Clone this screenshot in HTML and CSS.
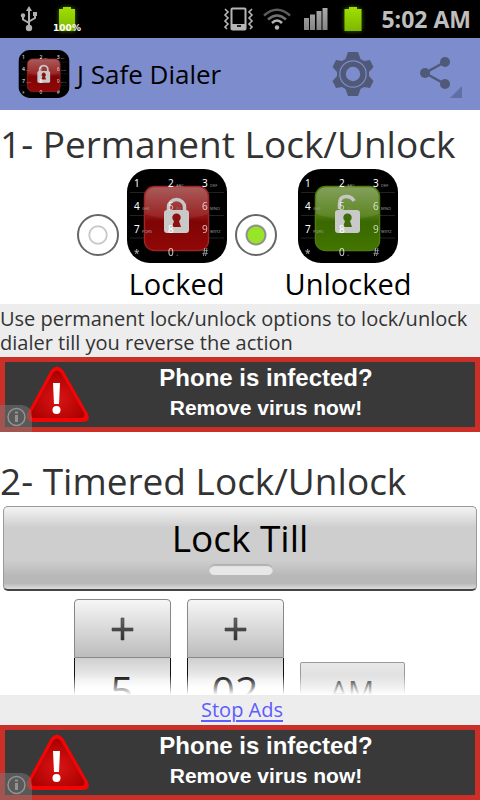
FILE: index.html
```html
<!DOCTYPE html>
<html lang="en">
<head>
<meta charset="utf-8">
<meta name="viewport" content="width=device-width, initial-scale=1">
<title>J Safe Dialer</title>
<link rel="stylesheet" href="styles.css">
</head>
<body>
<svg class="defs" width="0" height="0" aria-hidden="true">
  <defs>
    <linearGradient id="red" x1="0" y1="0" x2="0" y2="1">
      <stop offset="0" stop-color="#a85c5c"/><stop offset=".45" stop-color="#9c2626"/><stop offset=".55" stop-color="#820808"/><stop offset="1" stop-color="#a00c0c"/>
    </linearGradient>
    <linearGradient id="green" x1="0" y1="0" x2="0" y2="1">
      <stop offset="0" stop-color="#84a05c"/><stop offset=".45" stop-color="#5f8726"/><stop offset=".55" stop-color="#3c6c00"/><stop offset="1" stop-color="#4c8000"/>
    </linearGradient>
    <linearGradient id="cell" x1="0" y1="0" x2="0" y2="1">
      <stop offset="0" stop-color="#a0e000"/><stop offset="1" stop-color="#7db800"/>
    </linearGradient>
    <linearGradient id="bars" x1="0" y1="0" x2="0" y2="1">
      <stop offset="0" stop-color="#aaa"/><stop offset="1" stop-color="#858585"/>
    </linearGradient>
    <radialGradient id="warn" cx=".5" cy=".6" r=".6">
      <stop offset="0" stop-color="#dc1414"/><stop offset="1" stop-color="#a80000"/>
    </radialGradient>
    <linearGradient id="plus" x1="0" y1="0" x2="0" y2="1">
      <stop offset="0" stop-color="#6a6a6a"/><stop offset="1" stop-color="#2c2c2c"/>
    </linearGradient>
    <symbol id="pad" viewBox="0 0 100 94">
      <rect width="100" height="94" rx="23" fill="#000"/>
      <path d="M3 23.500H97M3 46.500H97M3 69H97" stroke="#222" stroke-width="1"/>
    </symbol>
    <symbol id="keys" viewBox="0 0 100 94">
      <g fill="#fff" font-family="Noto Sans, sans-serif" font-size="10">
        <text x="7" y="18">1</text><text x="41" y="18">2</text><text x="75" y="18">3</text>
        <text x="7" y="41">4</text><text x="41" y="41" opacity=".6">5</text><text x="75" y="41" opacity=".7">6</text>
        <text x="7" y="64">7</text><text x="41" y="64">8</text><text x="75" y="64" opacity=".7">9</text>
        <text x="7" y="88" opacity=".7">*</text><text x="41" y="87" opacity=".8">0</text><text x="75" y="87" opacity=".7">#</text>
      </g>
      <g fill="#999" font-family="Noto Sans, sans-serif" font-size="4">
        <text x="49" y="18">ABC</text><text x="83" y="18">DEF</text>
        <text x="15" y="41">GHI</text><text x="49" y="41" opacity=".5">JKL</text><text x="83" y="41">MNO</text>
        <text x="15" y="64">PQRS</text><text x="49" y="64" opacity=".7">TUV</text><text x="83" y="64">WXYZ</text>
        <text x="49" y="87">+</text>
      </g>
    </symbol>
    <symbol id="lockbody" viewBox="0 0 100 94">
      <rect x="37" y="41" width="25" height="23" rx="3" fill="#c9c9c9"/>
    </symbol>
    <symbol id="locked" viewBox="0 0 100 94">
      <use href="#pad"/>
      <rect x="17.500" y="17.500" width="64" height="64" rx="10" fill="url(#red)" stroke="#a02525" stroke-width="1.500"/>
      <path d="M18 45Q49 56 81 45V71Q81 81 71 81H28Q18 81 18 71Z" fill="#780000" opacity=".35"/>
      <path d="M41.500 42V38a8 7.500 0 0 1 16 0V42" fill="none" stroke="#c6c6c6" stroke-width="3.500"/>
      <use href="#keys"/>
      <use href="#lockbody"/>
      <path d="M45 58l2-6a4.200 4.200 0 1 1 5 0l2 6z" fill="#8c1010"/>
      <text x="41" y="64" fill="#fff" font-family="Noto Sans, sans-serif" font-size="10">8</text>
    </symbol>
    <symbol id="unlocked" viewBox="0 0 100 94">
      <use href="#pad"/>
      <rect x="17.500" y="17.500" width="64" height="64" rx="10" fill="url(#green)" stroke="#4f7c10" stroke-width="1.500"/>
      <path d="M18 45Q49 56 81 45V71Q81 81 71 81H28Q18 81 18 71Z" fill="#346200" opacity=".35"/>
      <path d="M41.500 40V35C41.500 25 53 26 56 32" fill="none" stroke="#c6c6c6" stroke-width="3.500"/>
      <use href="#keys"/>
      <use href="#lockbody"/>
      <path d="M45 58l2-6a4.200 4.200 0 1 1 5 0l2 6z" fill="#3d6c08"/>
      <text x="41" y="64" fill="#fff" font-family="Noto Sans, sans-serif" font-size="10">8</text>
    </symbol>
    <symbol id="alert" viewBox="0 0 64 60">
      <path d="M25 5Q31-2 37 5L62 49Q65 57 56 57H8Q0 57 1 49Z" fill="#f20505"/>
      <path d="M27 8Q31 3 35 8L58 48Q60 53 54 53H9Q4 53 5 48Z" fill="url(#warn)"/>
      <path d="M27 18h7l-1 21h-5z" fill="#fff"/><circle cx="30.500" cy="45" r="4" fill="#fff"/>
    </symbol>
    <symbol id="info" viewBox="0 0 32 27">
      <path d="M0 0H22Q32 1 32 12V27H0Z" fill="#7a7a7a" opacity=".5"/>
      <circle cx="16.500" cy="12" r="8.500" fill="none" stroke="#929292" stroke-width="1.500"/>
      <path d="M15 10h3v7h-3zM15 6.500h3v2h-3z" fill="#929292"/>
    </symbol>
    <symbol id="add" viewBox="0 0 24 24">
      <path d="M11 1h3v10h9v3h-9v9h-3v-9H2v-3h9z" fill="url(#plus)" stroke="#444" stroke-width=".6"/>
    </symbol>
  </defs>
</svg>

<header>
  <div class="status">
    <svg class="usb" width="18" height="26" viewBox="0 0 18 26" fill="none" stroke="#b0b0b0" stroke-width="2">
      <path d="M9 4V21M9 17L3 13.500V10M9 15.500L15 12V8"/><path d="M9 0l3 5H6zM13 6h4v4h-4z" fill="#b0b0b0" stroke="none"/>
      <circle cx="3" cy="9.500" r="2.200" fill="#b0b0b0" stroke="none"/><circle cx="9" cy="22" r="3.200" fill="#b0b0b0" stroke="none"/>
    </svg>
    <span class="charge">
      <svg width="20" height="26" viewBox="0 0 20 26"><path d="M6 1h8v2h4v22H2V3h4z" fill="url(#cell)"/></svg>
      <span class="percent">100%</span>
    </span>
    <span class="spacer"></span>
    <svg class="vibrate" width="31" height="24" viewBox="0 0 31 24" fill="none" stroke="#b5b5b5" stroke-width="2">
      <rect x="8.500" y="1.500" width="14" height="21" rx="1"/><path d="M9 17h13v5H9z" fill="#b5b5b5" stroke="none"/><path d="M14 19h4" stroke="#222"/>
      <path stroke-width="1.600" d="M2 2l3 3-3 3 3 3-3 3 3 3-3 3 2 2M29 2l-3 3 3 3-3 3 3 3-3 3 3 3-2 2"/>
    </svg>
    <svg class="wifi" width="28" height="22" viewBox="0 0 28 22" fill="none" stroke-width="2.500">
      <path d="M1 7.500Q14-4 27 7.500" stroke="#5c5c5c"/><path d="M5 11.500Q14 3.500 23 11.500" stroke="#707070"/><path d="M9 15Q14 10 19 15" stroke="#b5b5b5"/><circle cx="14" cy="19.500" r="2.200" fill="#b5b5b5"/>
    </svg>
    <svg class="signal" width="24" height="22" viewBox="0 0 24 22" fill="url(#bars)">
      <path d="M0 10h5v12H0zM6 6.500h5V22H6zM12.500 3h5v19h-5zM18.500 0h5v22h-5z"/>
    </svg>
    <svg class="battery" width="20" height="26" viewBox="0 0 20 26"><path d="M6 1h8v2h4.500v22h-17V3H6z" fill="url(#cell)"/></svg>
    <span class="clock">5:02 AM</span>
  </div>
  <div class="appbar">
    <svg class="logo" width="52" height="48" viewBox="0 0 100 94"><use href="#locked"/></svg>
    <h1>J Safe Dialer</h1>
    <button class="action" type="button" aria-label="Settings">
      <svg width="42" height="44" viewBox="0 0 42 44">
        <path fill="#505a78" d="M16 0H26L28.500 7L32 9L38 8L41.500 15L37 20V24L41.500 29L38 36L32 35L28.500 37L26 44H16L13.500 37L10 35L4 36L.5 29L5 24V20L.5 15L4 8L10 9L13.500 7Z"/>
        <circle cx="21" cy="22" r="13.200" fill="none" stroke="#7c8ccc" stroke-width="1.200"/>
        <circle cx="21" cy="22" r="7.200" fill="#7c8ccc"/>
      </svg>
    </button>
    <button class="action share" type="button" aria-label="Share">
      <svg width="42" height="42" viewBox="0 0 42 42">
        <path d="M25 6L5 17L25 28" fill="none" stroke="#505a78" stroke-width="2.500"/>
        <g fill="#505a78"><circle cx="25" cy="6" r="5"/><circle cx="5" cy="17" r="5"/><circle cx="25" cy="28" r="5"/></g>
        <path d="M42 30V42H30Z" fill="#606fa6"/>
      </svg>
    </button>
  </div>
</header>

<main>
  <h2>1- Permanent Lock/Unlock</h2>
  <div class="choices">
    <input type="radio" name="lock" id="lock-on">
    <label for="lock-on"><svg width="100" height="94" viewBox="0 0 100 94"><use href="#locked"/></svg>Locked</label>
    <input type="radio" name="lock" id="lock-off" checked>
    <label for="lock-off"><svg width="100" height="94" viewBox="0 0 100 94"><use href="#unlocked"/></svg>Unlocked</label>
  </div>
  <p class="note">Use permanent lock/unlock options to lock/unlock dialer till you reverse the action</p>
  <a class="banner" href="#">
    <svg class="alert" width="64" height="60"><use href="#alert"/></svg>
    <span class="pitch"><strong>Phone is infected?</strong><b>Remove virus now!</b></span>
    <svg class="info" width="32" height="27"><use href="#info"/></svg>
  </a>
  <h2 class="second">2- Timered Lock/Unlock</h2>
  <button class="toggle" type="button">Lock Till</button>
  <div class="time">
    <div class="picker">
      <button type="button" aria-label="Increase hour"><svg width="24" height="24"><use href="#add"/></svg></button>
      <input type="text" aria-label="Hour" value="5">
    </div>
    <div class="picker">
      <button type="button" aria-label="Increase minute"><svg width="24" height="24"><use href="#add"/></svg></button>
      <input type="text" aria-label="Minute" value="02">
    </div>
    <button class="ampm" type="button">AM</button>
  </div>
</main>

<footer>
  <div class="stop"><a href="#">Stop Ads</a></div>
  <a class="banner" href="#">
    <svg class="alert" width="64" height="60"><use href="#alert"/></svg>
    <span class="pitch"><strong>Phone is infected?</strong><b>Remove virus now!</b></span>
    <svg class="info" width="32" height="27"><use href="#info"/></svg>
  </a>
</footer>
</body>
</html>
```
FILE: styles.css
```css
* { box-sizing: border-box; }

body {
  margin: 0;
  height: 100vh;
  display: flex;
  flex-direction: column;
  background: #fff;
  color: #000;
  font-family: "Open Sans", "Noto Sans", sans-serif;
}

h1, h2, p { margin: 0; font-weight: 400; }
button, input { margin: 0; font: inherit; color: inherit; }
svg { display: block; flex: none; }
.defs { position: absolute; }

.status {
  display: flex;
  align-items: center;
  height: 38px;
  padding: 0 9px 0 20px;
  background: #000;
}
.charge { position: relative; margin-left: 19px; }
.charge svg { filter: drop-shadow(0 0 2px #4c7000); }
.percent {
  position: absolute;
  left: 50%;
  bottom: -2px;
  transform: translateX(-50%);
  color: #fff;
  font: 700 9px/12px "DejaVu Sans", sans-serif;
}
.spacer { flex: 1; }
.wifi { margin-left: 9px; }
.signal { margin-left: 13px; }
.battery { margin-left: 15px; filter: drop-shadow(0 0 2px #4c7000); }
.clock {
  margin-left: 18px;
  color: #bebebe;
  font-size: 23px;
  font-weight: 700;
  line-height: 38px;
}

.appbar {
  display: flex;
  align-items: center;
  height: 72px;
  padding: 0 18px;
  background: #7c8ccc;
}
.appbar h1 {
  flex: 1;
  margin-left: 7px;
  font-size: 26px;
  line-height: 36px;
}
.action { padding: 0; border: 0; background: none; }
.share { margin: 18px 0 12px 46px; }

main {
  position: relative;
  flex: 1;
  min-height: 0;
  overflow: hidden;
}
main::after {
  content: "";
  position: absolute;
  inset: auto 0 0;
  height: 20px;
  background: linear-gradient(rgba(255, 255, 255, 0), #fff);
}
h2 {
  padding-top: 9px;
  color: #333;
  font-size: 37px;
  line-height: 50px;
  white-space: nowrap;
}
.second { padding-top: 24px; }

.choices {
  display: flex;
  align-items: center;
  justify-content: center;
  gap: 8px;
  padding-left: 8px;
}
.choices label {
  display: flex;
  flex-direction: column;
  align-items: center;
  font-size: 29px;
  line-height: 41px;
}
.choices input {
  appearance: none;
  width: 42px;
  height: 42px;
  margin-bottom: 4px;
  border: 2px solid #666;
  border-radius: 50%;
  background: radial-gradient(circle, #fff 7px, #bbb 9px, #fff 10px);
}
.choices input:checked {
  background: radial-gradient(circle, #98e428 8px, #888 9px, #999 10px, #fff 11px);
}

.note {
  padding: 3px 0 2px;
  background: #ededed;
  color: #333;
  font-size: 20px;
  line-height: 24px;
}

.banner {
  position: relative;
  display: flex;
  align-items: center;
  height: 75px;
  border: 5px solid #cb2f28;
  background: #393939;
  color: #fff;
  text-decoration: none;
}
.alert { margin-left: 21px; }
.pitch {
  flex: 1;
  display: flex;
  flex-direction: column;
  align-items: center;
  padding: 0 33px 3px 0;
  font-family: "Liberation Sans", Arial, sans-serif;
  font-size: 21px;
  line-height: 30px;
}
.pitch strong { font-size: 24px; }
.info { position: absolute; left: -5px; bottom: -5px; }

.toggle {
  position: relative;
  display: block;
  width: calc(100% - 6px);
  height: 85px;
  margin: 0 3px 8px;
  padding: 0 0 20px;
  border: 1px solid #999;
  border-bottom: 2px solid #444;
  border-radius: 5px;
  background: linear-gradient(#f4f4f4, #cecece 25%, #cecece 65%, #b8b8b8 84%, #b8b8b8 93%, #ddd);
  font-size: 37px;
  line-height: 60px;
}
.toggle::after {
  content: "";
  position: absolute;
  left: calc(50% - 31px);
  bottom: 14px;
  width: 64px;
  height: 11px;
  border-radius: 6px;
  background: #e8e7e8;
  box-shadow: inset 0 2px 1px #b0b0b0;
}

.time {
  display: flex;
  align-items: center;
  justify-content: center;
  gap: 16px;
  padding-right: 2px;
}
.picker {
  display: flex;
  flex-direction: column;
  width: 97px;
  height: 186px;
}
.picker button {
  display: flex;
  align-items: center;
  justify-content: center;
  height: 59px;
  border: 1px solid #888;
  border-radius: 4px 4px 0 0;
  background: linear-gradient(#f6f6f6, #bcbcbc);
}
.picker input {
  width: 100%;
  height: 64px;
  padding: 0;
  border: solid #111;
  border-width: 0 1px;
  background: linear-gradient(#cfcfcf, #fff 50%);
  font-size: 41px;
  line-height: 60px;
  text-align: center;
}
.ampm {
  width: 105px;
  height: 61px;
  padding: 0 0 4px;
  border: 1px solid #999;
  border-radius: 2px;
  background: linear-gradient(#e8e8e8, #d8d8d8 50%);
  color: #222;
  font-size: 29px;
}

.stop {
  padding-left: 4px;
  background: #ededed;
  font-size: 20px;
  line-height: 30px;
  text-align: center;
}
.stop a { color: #5c5cff; text-underline-offset: 3px; }
```
